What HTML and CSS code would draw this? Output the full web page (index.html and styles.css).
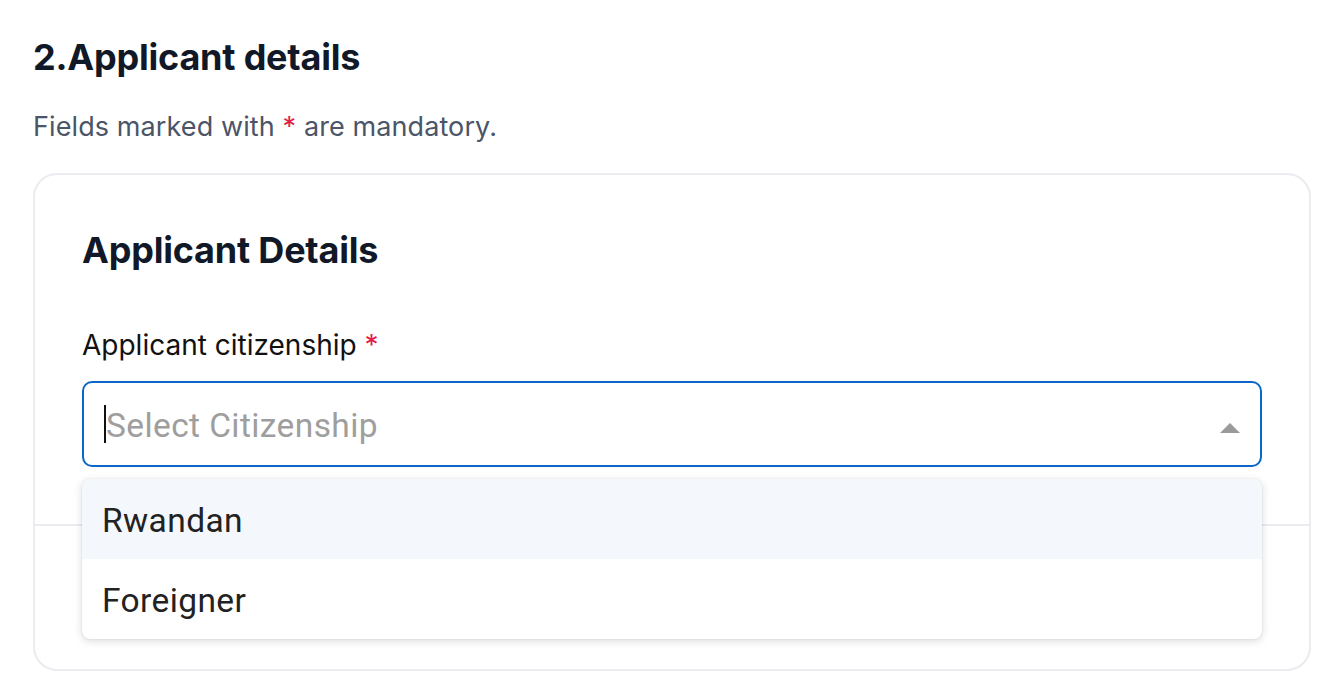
FILE: index.html
```html
<!DOCTYPE html>
<html>
<head>
<meta charset="utf-8">
<link rel="stylesheet" href="styles.css">
</head>
<body>
<main class="page">
  <h1 class="step-title">2.Applicant details</h1>
  <p class="hint">Fields marked with <span class="req">*</span> are mandatory.</p>
  <section class="card">
    <div class="card-body">
      <h2 class="card-title">Applicant Details</h2>
      <label class="field-label">Applicant citizenship <span class="req">*</span></label>
      <div class="select-wrap">
        <div class="select">
          <span class="caret-line"></span>
          <span class="placeholder">Select Citizenship</span>
          <svg class="arrow" width="20" height="10" viewBox="0 0 20 10"><path d="M0 10 L10 0 L20 10 Z" fill="#9a9a9a"/></svg>
        </div>
        <ul class="menu">
          <li class="option active">Rwandan</li>
          <li class="option">Foreigner</li>
        </ul>
      </div>
    </div>
    <div class="card-footer"></div>
  </section>
</main>
</body>
</html>
```
FILE: styles.css
```css
* { box-sizing: border-box; }
html, body { margin: 0; padding: 0; background: #fff; }
body { font-family: "Inter", "Liberation Sans", sans-serif; color: #0f172a; }
.page { padding: 31px 15px 0 33px; }
.step-title {
  margin: 0;
  font-size: 36px;
  line-height: 52px;
  font-weight: 700;
  color: #111827;
  letter-spacing: -0.2px;
}
.hint {
  margin: 26px 0 0;
  font-size: 27px;
  line-height: 36px;
  letter-spacing: 0.1px;
  color: #4b5567;
}
.req { color: #e11d48; }
.card {
  margin-top: 28px;
  border: 2px solid #ebebf0;
  border-radius: 24px;
  height: 498px;
  display: flex;
  flex-direction: column;
}
.card-body { padding: 49px 47px 0 47px; height: 351px; border-bottom: 2px solid #ebebf0; }
.card-title {
  margin: 0;
  font-size: 36px;
  line-height: 52px;
  font-weight: 700;
  color: #111827;
  letter-spacing: -0.2px;
}
.field-label {
  display: block;
  margin-top: 51px;
  font-size: 28px;
  line-height: 36px;
  color: #111;
}
.select-wrap { position: relative; margin-top: 18px; }
.select {
  height: 86px;
  border: 2px solid #0a66c8;
  border-radius: 10px;
  display: flex;
  align-items: center;
  padding: 0 20px 0 20px;
}
.caret-line { width: 2px; height: 38px; background: #111; }
.placeholder {
  flex: 1;
  font-family: "Roboto", "Liberation Sans", sans-serif;
  font-size: 33.5px;
  letter-spacing: 0.4px;
  color: #9e9e9e;
  padding-top: 2px;
}
.arrow { margin-top: 8px; }
.menu {
  position: absolute;
  left: 0; right: 0; top: 98px;
  margin: 0; padding: 0;
  list-style: none;
  background: #fff;
  border-radius: 8px;
  box-shadow: 0 2px 8px rgba(0,0,0,0.15), 0 0 1px rgba(0,0,0,0.2);
  overflow: hidden;
}
.option {
  height: 80px;
  display: flex;
  align-items: center;
  padding-left: 20px;
  padding-top: 2px;
  font-family: "Roboto", "Liberation Sans", sans-serif;
  font-size: 33.5px;
  letter-spacing: 0.4px;
  color: #222;
}
.option.active { background: #f4f8fc; }
```
